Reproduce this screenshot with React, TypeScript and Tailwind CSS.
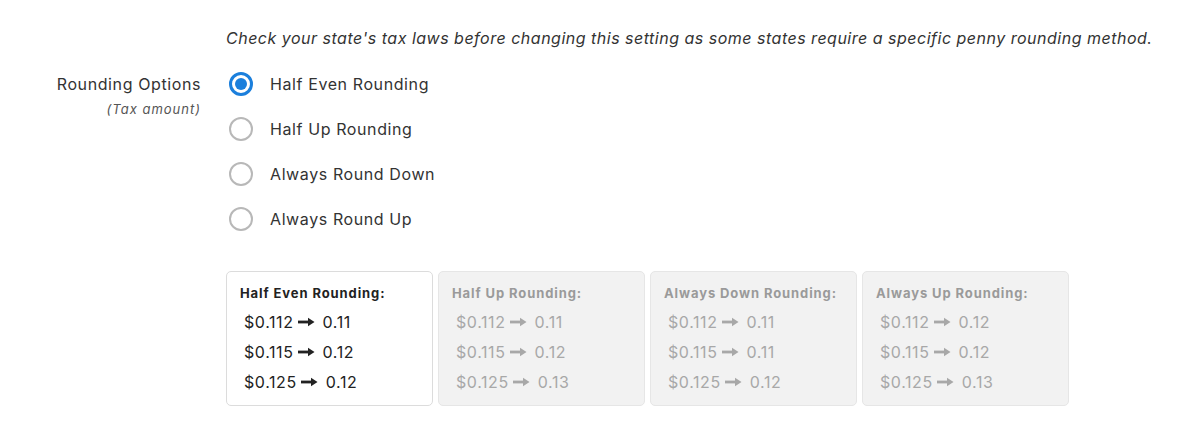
import React from "react";

const Arrow = ({ color }: { color: string }) => (
  <svg width="17" height="10" viewBox="0 0 17 10" className="ml-[4px] mr-[8px] shrink-0">
    <rect x="0" y="3.6" width="11" height="2.8" fill={color} />
    <polygon points="10,0.8 16.5,5 10,9.2" fill={color} />
  </svg>
);

const cards = [
  { title: "Half Even Rounding:", vals: ["0.11", "0.12", "0.12"], active: true },
  { title: "Half Up Rounding:", vals: ["0.11", "0.12", "0.13"], active: false },
  { title: "Always Down Rounding:", vals: ["0.11", "0.11", "0.12"], active: false },
  { title: "Always Up Rounding:", vals: ["0.12", "0.12", "0.13"], active: false },
];
const inputs = ["$0.112", "$0.115", "$0.125"];
const options = ["Half Even Rounding", "Half Up Rounding", "Always Round Down", "Always Round Up"];

export default function App() {
  return (
    <div
      className="w-[1193px] h-[438px] bg-white text-[#222222]"
      style={{ fontFamily: "Inter, 'Noto Sans', sans-serif" }}
    >
      <div className="flex pt-[26px]">
        <div className="w-[201px] shrink-0" />
        <div className="ml-[25px] text-[16px] leading-[24px] italic text-[#333333] tracking-[0.5px] whitespace-nowrap">
          Check your state's tax laws before changing this setting as some states require a specific penny rounding method.
        </div>
      </div>
      <div className="flex mt-[22px]">
        <div className="w-[201px] shrink-0 text-right">
          <div className="text-[16px] leading-[24px] text-[#333333] tracking-[0.6px]">Rounding Options</div>
          <div className="text-[13px] leading-[18px] italic text-[#555555] mt-[4px] tracking-[1px]">(Tax amount)</div>
        </div>
        <div className="ml-[25px] flex flex-col gap-[21px]">
          {options.map((o, i) => (
            <div key={o} className="flex items-center h-[24px]">
              <div
                className={
                  i === 0
                    ? "ml-[3px] w-[24px] h-[24px] rounded-full border-[3px] border-[#1b7fdc] flex items-center justify-center"
                    : "ml-[3px] w-[24px] h-[24px] rounded-full border-[2.5px] border-[#b8b8b8]"
                }
              >
                {i === 0 && <div className="w-[12px] h-[12px] rounded-full bg-[#1b7fdc]" />}
              </div>
              <span className="ml-[17px] text-[16px] leading-[24px] text-[#333333] tracking-[0.6px]">{o}</span>
            </div>
          ))}
        </div>
      </div>
      <div className="flex mt-[40px]">
        <div className="w-[201px] shrink-0" />
        <div className="ml-[25px] flex gap-[5px]">
          {cards.map((c) => (
            <div
              key={c.title}
              className={
                c.active
                  ? "w-[207px] h-[135px] rounded-[5px] border border-[#dcdcdc] bg-white pl-[13px] pt-[12px]"
                  : "w-[207px] h-[135px] rounded-[5px] border border-[#e6e6e6] bg-[#f2f2f2] pl-[13px] pt-[12px]"
              }
            >
              <div
                className={
                  "text-[13px] leading-[18px] font-bold tracking-[0.9px] " +
                  (c.active ? "text-[#222222]" : "text-[#9a9a9a]")
                }
              >
                {c.title}
              </div>
              <div className="mt-[5px] ml-[4px] flex flex-col">
                {c.vals.map((v, j) => (
                  <div
                    key={j}
                    className={
                      "flex items-center h-[30px] text-[16px] tracking-[0.6px] " +
                      (c.active ? "text-[#222222]" : "text-[#a8a8a8]")
                    }
                  >
                    <span>{inputs[j]}</span>
                    <Arrow color={c.active ? "#222222" : "#a8a8a8"} />
                    <span>{v}</span>
                  </div>
                ))}
              </div>
            </div>
          ))}
        </div>
      </div>
    </div>
  );
}
